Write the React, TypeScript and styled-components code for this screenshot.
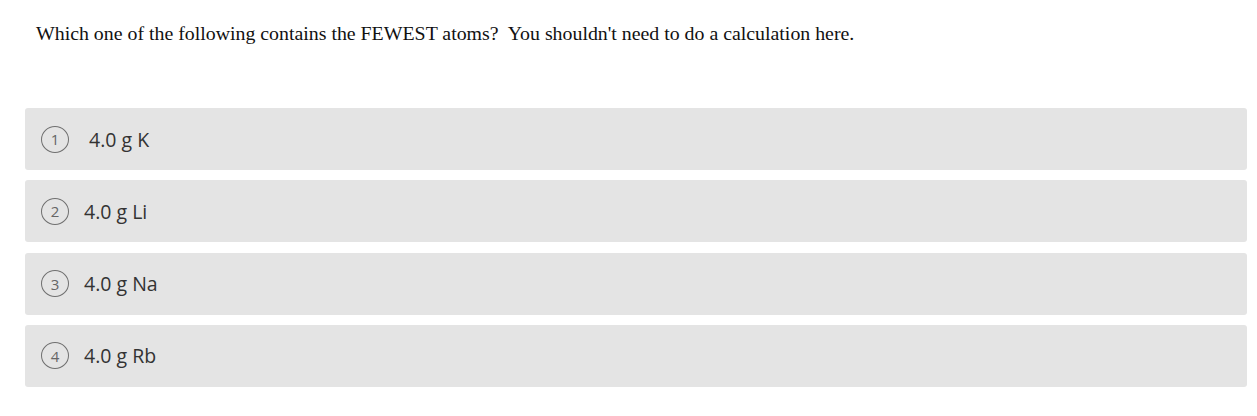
import React from 'react';
import styled, { createGlobalStyle } from 'styled-components';

const GlobalStyle = createGlobalStyle`
  html, body {
    margin: 0;
    padding: 0;
    background: #ffffff;
  }
`;

const options = [
  { num: 1, label: '4.0 g K', indent: 5 },
  { num: 2, label: '4.0 g Li', indent: 0 },
  { num: 3, label: '4.0 g Na', indent: 0 },
  { num: 4, label: '4.0 g Rb', indent: 0 },
];

const App = () => {
  return (
    <>
      <GlobalStyle />
      <Page>
        <Question>
          Which one of the following contains the FEWEST atoms?{'  '}You shouldn't need to do a calculation here.
        </Question>
        <OptionList>
          {options.map((o) => (
            <Option key={o.num}>
              <NumberBadge>{o.num}</NumberBadge>
              <OptionText indent={o.indent}>{o.label}</OptionText>
            </Option>
          ))}
        </OptionList>
      </Page>
    </>
  );
};

export default App;

const Page = styled.div`
  padding: 0 10px 0 25px;
`;

const Question = styled.p`
  margin: 0;
  padding: 20px 0 0 11px;
  font-family: 'Liberation Serif', 'Times New Roman', serif;
  font-size: 19.85px;
  line-height: 26px;
  color: #111;
  white-space: pre-wrap;
`;

const OptionList = styled.div`
  display: flex;
  flex-direction: column;
  gap: 10.3px;
  margin-top: 62px;
`;

const Option = styled.div`
  display: flex;
  align-items: center;
  height: 62px;
  padding: 0 0 0 16px;
  background: #e4e4e4;
  border-radius: 3px;
`;

const NumberBadge = styled.span`
  display: flex;
  align-items: center;
  justify-content: center;
  box-sizing: border-box;
  width: 28px;
  height: 27px;
  border: 1.5px solid #707070;
  border-radius: 50%;
  font-family: 'Open Sans', sans-serif;
  font-size: 15px;
  color: #666;
`;

const OptionText = styled.span<{ indent: number }>`
  margin-left: ${({ indent }) => 15 + indent}px;
  font-family: 'Open Sans', sans-serif;
  font-size: 19.5px;
  color: #333;
`;
